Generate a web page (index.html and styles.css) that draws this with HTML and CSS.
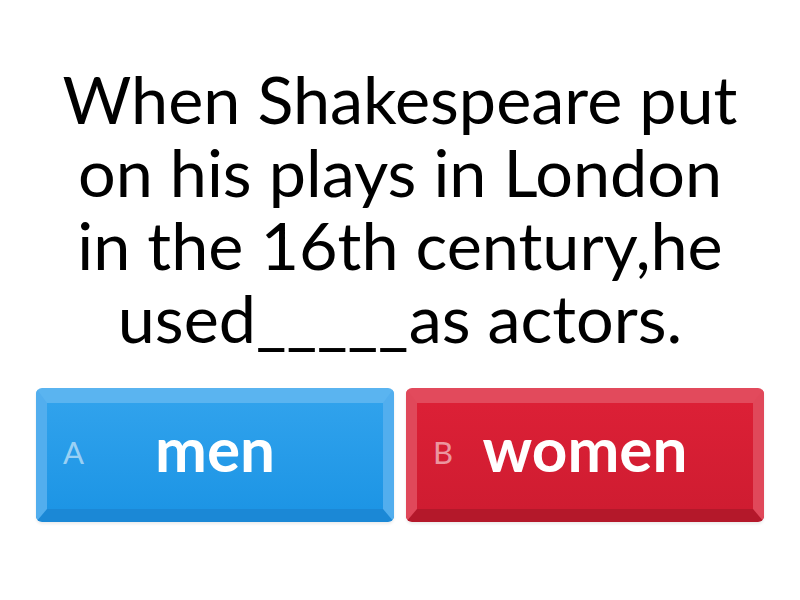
FILE: index.html
```html
<!DOCTYPE html>
<html>
<head>
<meta charset="utf-8">
<link rel="stylesheet" href="styles.css">
</head>
<body>
<div class="page">
  <div class="question">When Shakespeare put<br>on his plays in London<br>in the 16th century,he<br>used_____as actors.</div>
  <div class="answers">
    <div class="answer blue"><span class="key">A</span><span class="text">men</span></div>
    <div class="answer red"><span class="key">B</span><span class="text">women</span></div>
  </div>
</div>
</body>
</html>
```
FILE: styles.css
```css
html, body {
  margin: 0;
  padding: 0;
  background: #fff;
}
body {
  font-family: "Lato", "Noto Sans", sans-serif;
  width: 800px;
  height: 600px;
  overflow: hidden;
}
.page {
  display: flex;
  flex-direction: column;
  align-items: center;
}
.question {
  width: 760px;
  margin-top: 62px;
  font-size: 66.5px;
  line-height: 73px;
  text-align: center;
  color: #000;
}
.answers {
  margin-top: 34px;
  display: flex;
  gap: 12px;
}
.answer {
  position: relative;
  box-sizing: border-box;
  width: 358px;
  height: 134px;
  border-radius: 6px;
  border-style: solid;
  border-width: 15px 11px 13px 11px;
  display: flex;
  align-items: center;
  justify-content: center;
  box-shadow: 0 2px 3px rgba(0,0,0,0.08);
}
.blue {
  border-color: #5ab4f0 #52aeee #1b88d6 #52aeee;
  background: linear-gradient(#30a2ec, #1d95e5);
}
.red {
  border-color: #e24a5c #e0485a #b4182a #e0485a;
  background: linear-gradient(#dc2036, #cf1c31);
}
.key {
  position: absolute;
  left: 16px;
  top: 50%;
  transform: translateY(-50%);
  font-size: 31px;
  margin-top: -4px;
  color: rgba(255,255,255,0.55);
}
.text {
  color: #fff;
  font-size: 62px;
  font-weight: 700;
  margin-top: -16px;
}
```
